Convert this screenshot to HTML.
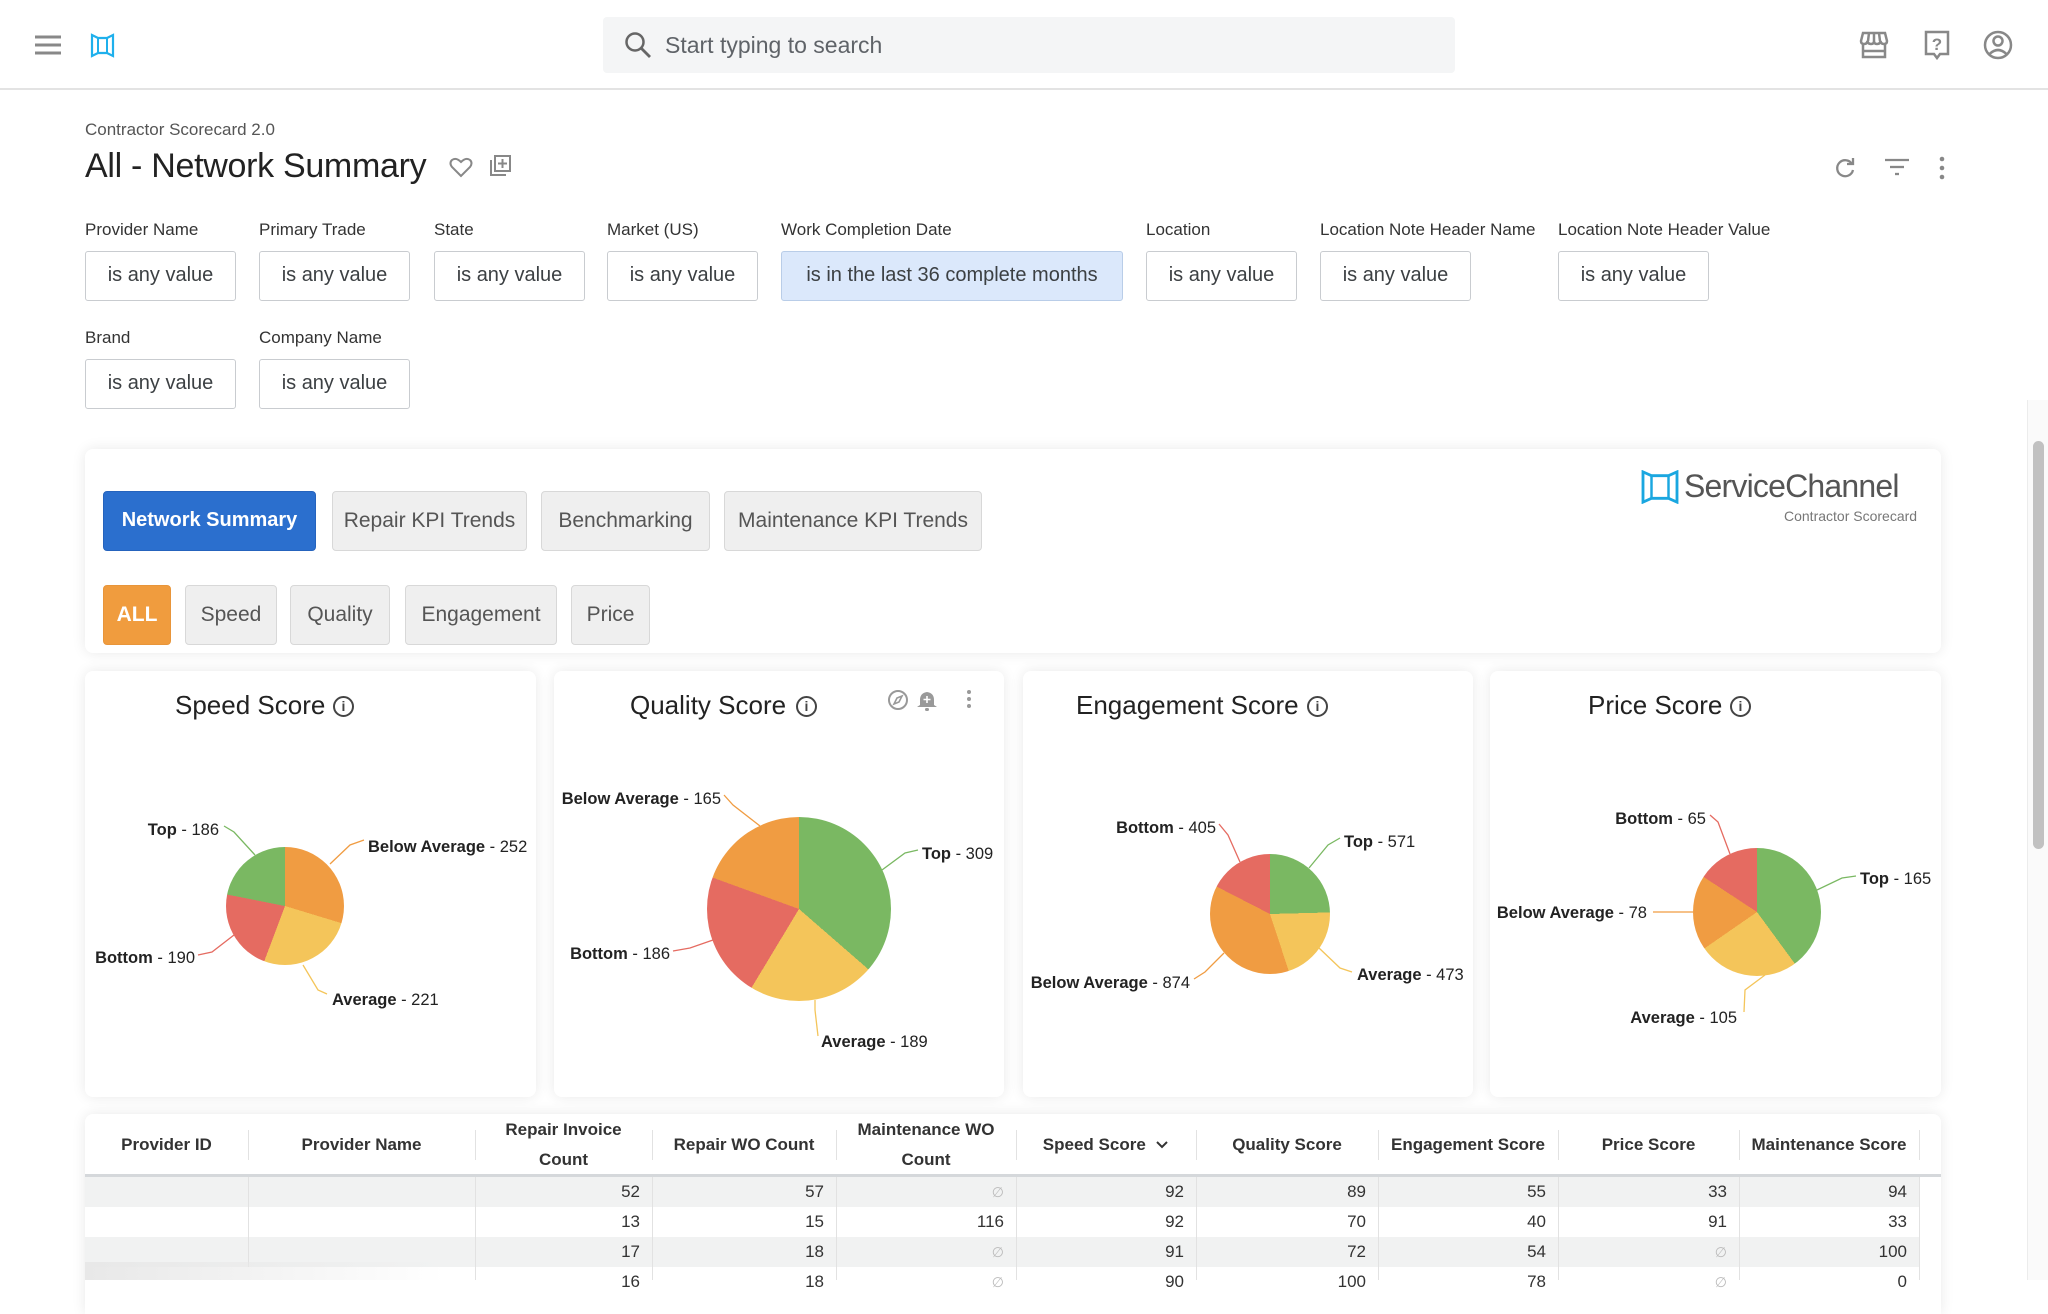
<!DOCTYPE html>
<html><head><meta charset="utf-8">
<style>
*{box-sizing:border-box;margin:0;padding:0}
body{width:2048px;height:1280px;overflow:hidden;background:#fff;font-family:"Liberation Sans",Arial,sans-serif;color:#333;position:relative}
.a{position:absolute}
.hdr{left:0;top:0;width:2048px;height:90px;border-bottom:2px solid #e3e3e3;background:#fff}
.search{left:603px;top:17px;width:852px;height:56px;background:#f4f5f6;border-radius:4px}
.search span{position:absolute;left:62px;top:15px;font-size:23px;color:#5f6368}
.lbl{font-size:17px;color:#333}
.box{height:50px;border:1.5px solid #c9ccd0;border-radius:3px;font-size:20px;color:#3c4043;text-align:center;line-height:47px;background:#fff}
.card{background:#fff;border-radius:8px;box-shadow:0 0 14px rgba(0,0,0,0.09)}
.tab{height:60px;border-radius:4px;background:#efefef;border:1.5px solid #d8d8d8;font-size:21px;color:#555;text-align:center;line-height:57px}
.sub{top:585px;height:60px;border-radius:4px;background:#efefef;border:1.5px solid #d8d8d8;font-size:21px;color:#555;text-align:center;line-height:57px}
.ct{font-size:26px;color:#222;top:690px}
.info{width:21px;height:21px;border:2px solid #444;border-radius:50%;font-size:14px;line-height:17px;text-align:center;color:#444;font-weight:bold;top:696px}
.pie{border-radius:50%}
.th{font-size:17px;font-weight:bold;color:#333;text-align:center;top:1114px;height:61px;display:flex;align-items:center;justify-content:center;line-height:30px}
.sep{width:1px;background:#e2e2e2}
.row{left:85px;width:1834px;height:30px}
.nul{color:#bbb;font-size:14px}
</style></head><body>

<div class="a hdr"></div>
<svg class="a" style="left:34px;top:34px" width="28" height="22"><g stroke="#888" stroke-width="3"><line x1="1" y1="3" x2="27" y2="3"/><line x1="1" y1="11" x2="27" y2="11"/><line x1="1" y1="19" x2="27" y2="19"/></g></svg>
<svg class="a" style="left:90px;top:33px" width="25" height="25" viewBox="0 0 25 25"><path d="M2 2 L8 5 L17 5 L23 2 L23 23 L17 20 L8 20 L2 23 Z" fill="none" stroke="#1fb0ec" stroke-width="2.2"/><rect x="8" y="5" width="9" height="15" fill="none" stroke="#1fb0ec" stroke-width="2"/></svg>
<div class="a search"><svg class="a" style="left:20px;top:13px" width="30" height="30"><circle cx="12" cy="12" r="8.5" fill="none" stroke="#666" stroke-width="2.5"/><line x1="18" y1="18" x2="27" y2="27" stroke="#666" stroke-width="2.8"/></svg><span>Start typing to search</span></div>
<svg class="a" style="left:1859px;top:31px" width="30" height="28" viewBox="0 0 30 28"><g fill="none" stroke="#888" stroke-width="2.5"><path d="M4 2 H26 L28 10 Q28 13 25 13 Q22 13 21.5 10 Q21 13 18 13 Q15 13 15 10 Q15 13 12 13 Q9 13 8.5 10 Q8 13 5 13 Q2 13 2 10 Z"/><path d="M4 13 V26 H26 V13"/><path d="M4 20 H26"/><line x1="10" y1="2" x2="9" y2="10"/><line x1="15" y1="2" x2="15" y2="10"/><line x1="20" y1="2" x2="21" y2="10"/></g></svg>
<svg class="a" style="left:1923px;top:30px" width="28" height="32" viewBox="0 0 28 32"><path d="M3 2 H25 V24 H17 L14 28 L11 24 H3 Z" fill="none" stroke="#888" stroke-width="2.5"/><text x="14" y="20" font-size="17" font-family="Liberation Sans" text-anchor="middle" fill="#888" font-weight="bold">?</text></svg>
<svg class="a" style="left:1983px;top:30px" width="30" height="30" viewBox="0 0 30 30"><circle cx="15" cy="15" r="13" fill="none" stroke="#888" stroke-width="2.5"/><circle cx="15" cy="11" r="4.5" fill="none" stroke="#888" stroke-width="2.5"/><path d="M6.5 24 Q15 16 23.5 24" fill="none" stroke="#888" stroke-width="2.5"/></svg>

<div class="a" style="left:85px;top:120px;font-size:17px;color:#555">Contractor Scorecard 2.0</div>
<div class="a" style="left:85px;top:147px;font-size:34px;color:#222;letter-spacing:-0.3px">All - Network Summary</div>
<svg class="a" style="left:449px;top:156px" width="24" height="22" viewBox="0 0 24 22"><path d="M12 20 L3 11 Q0 7 3 4 Q7 1 12 6 Q17 1 21 4 Q24 7 21 11 Z" fill="none" stroke="#888" stroke-width="2"/></svg>
<svg class="a" style="left:488px;top:154px" width="24" height="24" viewBox="0 0 24 24"><g fill="none" stroke="#888" stroke-width="2"><rect x="7" y="2" width="15" height="15"/><path d="M3 6 V21 H18"/><line x1="14.5" y1="5" x2="14.5" y2="14"/><line x1="10" y1="9.5" x2="19" y2="9.5"/></g></svg>
<svg class="a" style="left:1833px;top:156px" width="24" height="24" viewBox="0 0 24 24"><path d="M19 8 A8 8 0 1 0 20 14" fill="none" stroke="#888" stroke-width="2.3"/><path d="M14 8 H20 V2" fill="none" stroke="#888" stroke-width="2.3"/></svg>
<svg class="a" style="left:1884px;top:157px" width="26" height="20"><g stroke="#888" stroke-width="2.3"><line x1="1" y1="3" x2="25" y2="3"/><line x1="6" y1="10" x2="20" y2="10"/><line x1="11" y1="17" x2="15" y2="17"/></g></svg>
<svg class="a" style="left:1938px;top:156px" width="8" height="24"><g fill="#888"><circle cx="4" cy="3" r="2.3"/><circle cx="4" cy="12" r="2.3"/><circle cx="4" cy="21" r="2.3"/></g></svg>

<div class="a lbl" style="left:85px;top:220px">Provider Name</div>
<div class="a lbl" style="left:259px;top:220px">Primary Trade</div>
<div class="a lbl" style="left:434px;top:220px">State</div>
<div class="a lbl" style="left:607px;top:220px">Market (US)</div>
<div class="a lbl" style="left:781px;top:220px">Work Completion Date</div>
<div class="a lbl" style="left:1146px;top:220px">Location</div>
<div class="a lbl" style="left:1320px;top:220px">Location Note Header Name</div>
<div class="a lbl" style="left:1558px;top:220px">Location Note Header Value</div>
<div class="a box" style="left:85px;top:251px;width:151px">is any value</div>
<div class="a box" style="left:259px;top:251px;width:151px">is any value</div>
<div class="a box" style="left:434px;top:251px;width:151px">is any value</div>
<div class="a box" style="left:607px;top:251px;width:151px">is any value</div>
<div class="a box" style="left:781px;top:251px;width:342px;background:#dbe8fb;border-color:#b9cde8">is in the last 36 complete months</div>
<div class="a box" style="left:1146px;top:251px;width:151px">is any value</div>
<div class="a box" style="left:1320px;top:251px;width:151px">is any value</div>
<div class="a box" style="left:1558px;top:251px;width:151px">is any value</div>
<div class="a lbl" style="left:85px;top:328px">Brand</div>
<div class="a lbl" style="left:259px;top:328px">Company Name</div>
<div class="a box" style="left:85px;top:359px;width:151px">is any value</div>
<div class="a box" style="left:259px;top:359px;width:151px">is any value</div>

<div class="a card" style="left:85px;top:449px;width:1856px;height:204px"></div>
<div class="a tab" style="left:103px;top:491px;width:213px;background:#2b6fce;border-color:#2563bd;color:#fff;font-weight:bold;font-size:20px">Network Summary</div>
<div class="a tab" style="left:332px;top:491px;width:195px">Repair KPI Trends</div>
<div class="a tab" style="left:541px;top:491px;width:169px">Benchmarking</div>
<div class="a tab" style="left:724px;top:491px;width:258px">Maintenance KPI Trends</div>
<div class="a sub" style="left:103px;width:68px;background:#f09c3e;border-color:#e8953a;color:#fff;font-weight:bold">ALL</div>
<div class="a sub" style="left:185px;width:92px">Speed</div>
<div class="a sub" style="left:290px;width:100px">Quality</div>
<div class="a sub" style="left:405px;width:152px">Engagement</div>
<div class="a sub" style="left:571px;width:79px">Price</div>
<svg class="a" style="left:1641px;top:470px" width="38" height="34" viewBox="0 0 40 36"><path d="M2 2 L11 6 L29 6 L38 2 L38 34 L29 30 L11 30 L2 34 Z" fill="none" stroke="#1aa7e0" stroke-width="3"/><rect x="11" y="6" width="18" height="24" fill="none" stroke="#1aa7e0" stroke-width="2.6"/></svg>
<div class="a" style="left:1684px;top:468px;font-size:32px;color:#555;letter-spacing:-0.8px">ServiceChannel</div>
<div class="a" style="left:1784px;top:508px;font-size:14px;color:#777">Contractor Scorecard</div>

<div class="a card" style="left:85px;top:671px;width:451px;height:426px"></div>
<div class="a card" style="left:554px;top:671px;width:450px;height:426px"></div>
<div class="a card" style="left:1023px;top:671px;width:450px;height:426px"></div>
<div class="a card" style="left:1490px;top:671px;width:451px;height:426px"></div>

<div class="a ct" style="left:175px">Speed Score</div><div class="a info" style="left:333px">i</div>
<div class="a ct" style="left:630px">Quality Score</div><div class="a info" style="left:796px">i</div>
<div class="a ct" style="left:1076px">Engagement Score</div><div class="a info" style="left:1307px">i</div>
<div class="a ct" style="left:1588px">Price Score</div><div class="a info" style="left:1730px">i</div>
<svg class="a" style="left:887px;top:689px" width="94" height="24"><circle cx="11" cy="11" r="9" fill="none" stroke="#999" stroke-width="2"/><path d="M15 7 L12 13 L7 15 L10 9 Z" fill="none" stroke="#999" stroke-width="1.6"/><path d="M40 3 Q47 4 47 11 V16 L50 18 H30 L33 16 V11 Q33 4 40 3 Z" fill="#999"/><rect x="38" y="19" width="4" height="3" rx="1.5" fill="#999"/><path d="M40 7 V14 M36.5 10.5 H43.5" stroke="#fff" stroke-width="1.6"/><g fill="#999"><circle cx="82" cy="3" r="2"/><circle cx="82" cy="10" r="2"/><circle cx="82" cy="17" r="2"/></g></svg>

<div class="a pie" style="left:226px;top:847px;width:118px;height:118px;background:conic-gradient(#f09c42 0 106.9deg,#f4c55a 0 200.6deg,#e56b61 0 281.2deg,#7ab862 0 360deg)"></div>
<div class="a pie" style="left:707px;top:817px;width:184px;height:184px;background:conic-gradient(#7ab862 0 131deg,#f4c55a 0 211.1deg,#e56b61 0 290deg,#f09c42 0 360deg)"></div>
<div class="a pie" style="left:1210px;top:854px;width:120px;height:120px;background:conic-gradient(#7ab862 0 88.5deg,#f4c55a 0 161.8deg,#f09c42 0 297.2deg,#e56b61 0 360deg)"></div>
<div class="a pie" style="left:1693px;top:848px;width:128px;height:128px;background:conic-gradient(#7ab862 0 143.8deg,#f4c55a 0 235.3deg,#f09c42 0 303.3deg,#e56b61 0 360deg)"></div>

<svg class="a" style="left:0;top:0" width="2048" height="1280" font-family="Liberation Sans, Arial, sans-serif" font-size="16.5" fill="#222">
<g fill="none" stroke-width="1.3">
<polyline points="224,826 234,832 255,855" stroke="#7ab862"/>
<polyline points="364,840 350,845 330,864" stroke="#f09c42"/>
<polyline points="198,955 212,952 234,935" stroke="#e56b61"/>
<polyline points="327,994 318,990 303,965" stroke="#f4c55a"/>
<polyline points="724,795 733,805 760,826" stroke="#f09c42"/>
<polyline points="918,850 905,853 882,870" stroke="#7ab862"/>
<polyline points="673,951 690,948 713,940" stroke="#e56b61"/>
<polyline points="818,1036 815,1010 815,1000" stroke="#f4c55a"/>
<polyline points="1219,824 1228,835 1240,862" stroke="#e56b61"/>
<polyline points="1340,838 1328,845 1309,868" stroke="#7ab862"/>
<polyline points="1194,979 1205,972 1224,953" stroke="#f09c42"/>
<polyline points="1352,972 1340,968 1319,948" stroke="#f4c55a"/>
<polyline points="1710,815 1718,822 1730,854" stroke="#e56b61"/>
<polyline points="1856,876 1842,878 1817,890" stroke="#7ab862"/>
<polyline points="1653,912 1693,912" stroke="#f09c42"/>
<polyline points="1744,1012 1745,990 1765,975" stroke="#f4c55a"/>
</g>
<text x="219" y="835" text-anchor="end"><tspan font-weight="bold">Top</tspan> - 186</text>
<text x="368" y="852"><tspan font-weight="bold">Below Average</tspan> - 252</text>
<text x="195" y="963" text-anchor="end"><tspan font-weight="bold">Bottom</tspan> - 190</text>
<text x="332" y="1005"><tspan font-weight="bold">Average</tspan> - 221</text>
<text x="721" y="804" text-anchor="end"><tspan font-weight="bold">Below Average</tspan> - 165</text>
<text x="922" y="859"><tspan font-weight="bold">Top</tspan> - 309</text>
<text x="670" y="959" text-anchor="end"><tspan font-weight="bold">Bottom</tspan> - 186</text>
<text x="821" y="1047"><tspan font-weight="bold">Average</tspan> - 189</text>
<text x="1216" y="833" text-anchor="end"><tspan font-weight="bold">Bottom</tspan> - 405</text>
<text x="1344" y="847"><tspan font-weight="bold">Top</tspan> - 571</text>
<text x="1190" y="988" text-anchor="end"><tspan font-weight="bold">Below Average</tspan> - 874</text>
<text x="1357" y="980"><tspan font-weight="bold">Average</tspan> - 473</text>
<text x="1706" y="824" text-anchor="end"><tspan font-weight="bold">Bottom</tspan> - 65</text>
<text x="1860" y="884"><tspan font-weight="bold">Top</tspan> - 165</text>
<text x="1647" y="918" text-anchor="end"><tspan font-weight="bold">Below Average</tspan> - 78</text>
<text x="1737" y="1023" text-anchor="end"><tspan font-weight="bold">Average</tspan> - 105</text>
</svg>

<div class="a card" style="left:85px;top:1114px;width:1856px;height:200px;border-radius:8px 8px 0 0"></div>
<div class="a th" style="left:85px;width:163px">Provider ID</div>
<div class="a th" style="left:248px;width:227px">Provider Name</div>
<div class="a th" style="left:475px;width:177px">Repair Invoice<br>Count</div>
<div class="a th" style="left:652px;width:184px">Repair WO Count</div>
<div class="a th" style="left:836px;width:180px">Maintenance WO<br>Count</div>
<div class="a th" style="left:1016px;width:180px">Speed Score &nbsp;<svg width="14" height="10"><path d="M2 2 L7 7 L12 2" fill="none" stroke="#333" stroke-width="2"/></svg></div>
<div class="a th" style="left:1196px;width:182px">Quality Score</div>
<div class="a th" style="left:1378px;width:180px">Engagement Score</div>
<div class="a th" style="left:1558px;width:181px">Price Score</div>
<div class="a th" style="left:1739px;width:180px">Maintenance Score</div>
<div class="a" style="left:85px;top:1174px;width:1856px;height:3px;background:#d5d8db"></div>
<div class="a row" style="top:1177px;background:#f1f2f2"></div>
<div class="a row" style="top:1237px;background:#f1f2f2"></div>
<div class="a sep" style="left:248px;top:1130px;height:30px"></div><div class="a sep" style="left:475px;top:1130px;height:30px"></div><div class="a sep" style="left:652px;top:1130px;height:30px"></div><div class="a sep" style="left:836px;top:1130px;height:30px"></div><div class="a sep" style="left:1016px;top:1130px;height:30px"></div><div class="a sep" style="left:1196px;top:1130px;height:30px"></div><div class="a sep" style="left:1378px;top:1130px;height:30px"></div><div class="a sep" style="left:1558px;top:1130px;height:30px"></div><div class="a sep" style="left:1739px;top:1130px;height:30px"></div><div class="a sep" style="left:1919px;top:1130px;height:30px"></div>
<div class="a sep" style="left:248px;top:1177px;height:90px"></div><div class="a sep" style="left:475px;top:1177px;height:103px"></div><div class="a sep" style="left:652px;top:1177px;height:103px"></div><div class="a sep" style="left:836px;top:1177px;height:103px"></div><div class="a sep" style="left:1016px;top:1177px;height:103px"></div><div class="a sep" style="left:1196px;top:1177px;height:103px"></div><div class="a sep" style="left:1378px;top:1177px;height:103px"></div><div class="a sep" style="left:1558px;top:1177px;height:103px"></div><div class="a sep" style="left:1739px;top:1177px;height:103px"></div><div class="a sep" style="left:1919px;top:1177px;height:103px"></div>

<div class="a" style="left:475px;top:1177px;width:1444px;font-size:17px">
<div style="display:flex;height:30px;line-height:30px;text-align:right"><div style="width:177px;padding-right:12px">52</div><div style="width:184px;padding-right:12px">57</div><div style="width:180px;padding-right:12px" class="nul">∅</div><div style="width:180px;padding-right:12px">92</div><div style="width:182px;padding-right:12px">89</div><div style="width:180px;padding-right:12px">55</div><div style="width:181px;padding-right:12px">33</div><div style="width:180px;padding-right:12px">94</div></div>
<div style="display:flex;height:30px;line-height:30px;text-align:right"><div style="width:177px;padding-right:12px">13</div><div style="width:184px;padding-right:12px">15</div><div style="width:180px;padding-right:12px">116</div><div style="width:180px;padding-right:12px">92</div><div style="width:182px;padding-right:12px">70</div><div style="width:180px;padding-right:12px">40</div><div style="width:181px;padding-right:12px">91</div><div style="width:180px;padding-right:12px">33</div></div>
<div style="display:flex;height:30px;line-height:30px;text-align:right"><div style="width:177px;padding-right:12px">17</div><div style="width:184px;padding-right:12px">18</div><div style="width:180px;padding-right:12px" class="nul">∅</div><div style="width:180px;padding-right:12px">91</div><div style="width:182px;padding-right:12px">72</div><div style="width:180px;padding-right:12px">54</div><div style="width:181px;padding-right:12px" class="nul">∅</div><div style="width:180px;padding-right:12px">100</div></div>
<div style="display:flex;height:30px;line-height:30px;text-align:right"><div style="width:177px;padding-right:12px">16</div><div style="width:184px;padding-right:12px">18</div><div style="width:180px;padding-right:12px" class="nul">∅</div><div style="width:180px;padding-right:12px">90</div><div style="width:182px;padding-right:12px">100</div><div style="width:180px;padding-right:12px">78</div><div style="width:181px;padding-right:12px" class="nul">∅</div><div style="width:180px;padding-right:12px">0</div></div>
</div>
<div class="a" style="left:85px;top:1262px;width:360px;height:18px;background:linear-gradient(90deg,#e8e8e8,rgba(255,255,255,0))"></div>

<div class="a" style="left:2027px;top:400px;width:21px;height:880px;background:#fafafa;border-left:1px solid #ececec"></div>
<div class="a" style="left:2033px;top:441px;width:11px;height:408px;background:#c1c1c1;border-radius:6px"></div>
</body></html>
